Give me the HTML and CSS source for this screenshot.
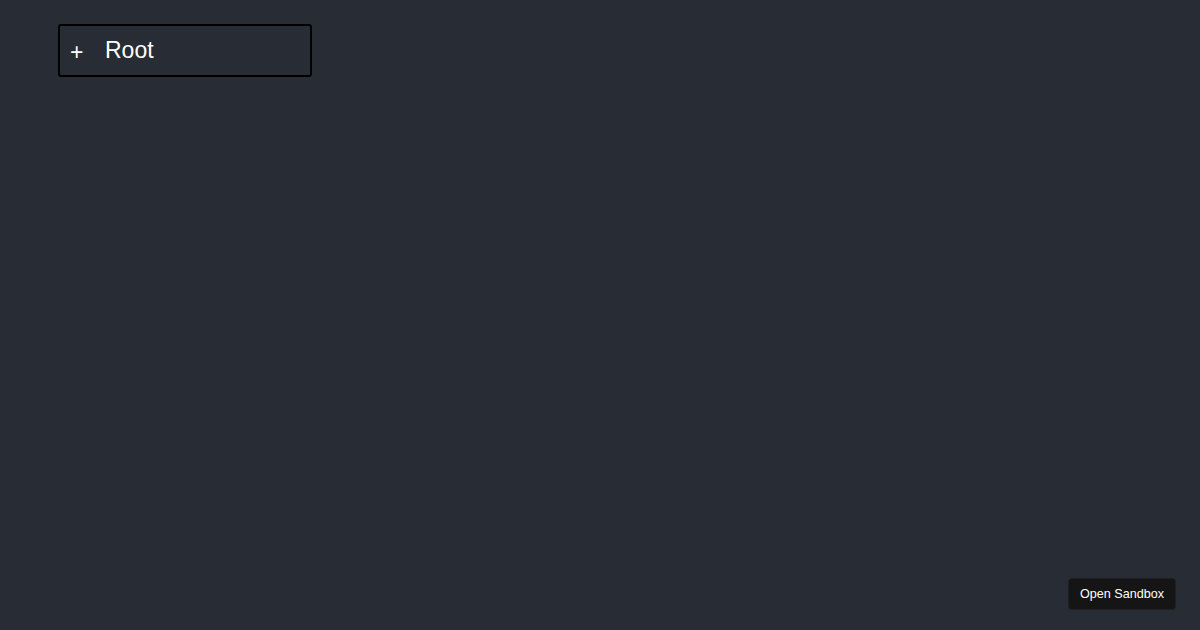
FILE: index.html
```html
<!DOCTYPE html>
<html>
<head>
<meta charset="utf-8">
<link rel="stylesheet" href="styles.css">
</head>
<body>
<div class="tree">
  <div class="node">
    <span class="toggle">+</span>
    <span class="label">Root</span>
  </div>
</div>
<button class="sandbox">Open Sandbox</button>
</body>
</html>
```
FILE: styles.css
```css
html, body {
  margin: 0;
  padding: 0;
  height: 100%;
  background: #282c34;
  font-family: "Liberation Sans", Arial, sans-serif;
  color: #fff;
}
.tree {
  padding: 24px 0 0 58px;
}
.node {
  box-sizing: border-box;
  width: 254px;
  height: 53px;
  border: 2px solid #000;
  border-radius: 3px;
  display: flex;
  align-items: center;
  padding-left: 10px;
}
.toggle {
  font-size: 23px;
  width: 35px;
  line-height: 1;
  margin-top: 3px;
}
.label {
  font-size: 23px;
  line-height: 1;
}
.sandbox {
  position: fixed;
  right: 24px;
  bottom: 20px;
  height: 32px;
  padding: 0 11px;
  background: #151515;
  color: #fff;
  border: 1px solid #1f1f1f;
  border-radius: 4px;
  font-family: "Liberation Sans", Arial, sans-serif;
  font-size: 12.6px;
}
```
